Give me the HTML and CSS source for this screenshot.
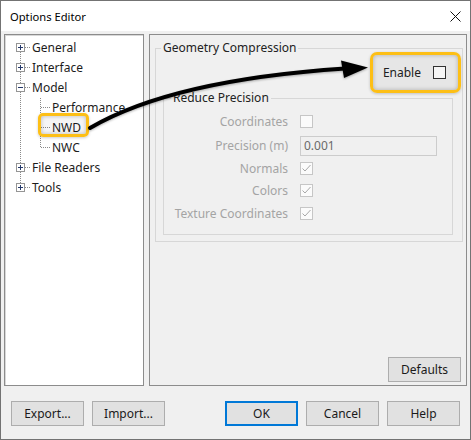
FILE: index.html
```html
<!DOCTYPE html>
<html>
<head>
<meta charset="utf-8">
<link rel="stylesheet" href="styles.css">
</head>
<body>
<div class="window">
  <div class="titlebar">
    <span class="title">Options Editor</span>
    <svg class="close" width="11" height="11" viewBox="0 0 11 11"><path d="M0.5 0.5 L10.5 10.5 M10.5 0.5 L0.5 10.5" stroke="#111" stroke-width="1" fill="none"/></svg>
  </div>
  <div class="body">
    <div class="panes">
      <div class="tree">
        <div class="row">
          <svg class="conn" width="27" height="20"><path d="M15.5 14 V20" class="dot"/><path d="M20 9.5 H26" class="dot"/><rect x="11.5" y="5.5" width="8" height="8" class="box"/><path d="M13 9.5 H18 M15.5 7 V12" class="sign"/></svg>
          <span class="t">General</span>
        </div>
        <div class="row">
          <svg class="conn" width="27" height="20"><path d="M15.5 0 V5 M15.5 14 V20" class="dot"/><path d="M20 9.5 H26" class="dot"/><rect x="11.5" y="5.5" width="8" height="8" class="box"/><path d="M13 9.5 H18 M15.5 7 V12" class="sign"/></svg>
          <span class="t">Interface</span>
        </div>
        <div class="row">
          <svg class="conn" width="27" height="20"><path d="M15.5 0 V5 M15.5 14 V20" class="dot"/><path d="M20 9.5 H26" class="dot"/><rect x="11.5" y="5.5" width="8" height="8" class="box"/><path d="M13 9.5 H18" class="sign"/></svg>
          <span class="t">Model</span>
        </div>
        <div class="row">
          <svg class="conn" width="47" height="20"><path d="M15.5 0 V20 M35.5 0 V20" class="dot"/><path d="M36 9.5 H46" class="dot"/></svg>
          <span class="t">Performance</span>
        </div>
        <div class="row">
          <svg class="conn" width="47" height="20"><path d="M15.5 0 V20 M35.5 0 V20" class="dot"/><path d="M36 9.5 H46" class="dot"/></svg>
          <span class="t">NWD</span>
        </div>
        <div class="row">
          <svg class="conn" width="47" height="20"><path d="M15.5 0 V20 M35.5 0 V10" class="dot"/><path d="M36 9.5 H46" class="dot"/></svg>
          <span class="t">NWC</span>
        </div>
        <div class="row">
          <svg class="conn" width="27" height="20"><path d="M15.5 0 V5 M15.5 14 V20" class="dot"/><path d="M20 9.5 H26" class="dot"/><rect x="11.5" y="5.5" width="8" height="8" class="box"/><path d="M13 9.5 H18 M15.5 7 V12" class="sign"/></svg>
          <span class="t">File Readers</span>
        </div>
        <div class="row">
          <svg class="conn" width="27" height="20"><path d="M15.5 0 V5" class="dot"/><path d="M20 9.5 H26" class="dot"/><rect x="11.5" y="5.5" width="8" height="8" class="box"/><path d="M13 9.5 H18 M15.5 7 V12" class="sign"/></svg>
          <span class="t">Tools</span>
        </div>
      </div>
      <div class="page">
        <fieldset class="geo">
          <legend>Geometry Compression</legend>
          <div class="enable">
            <span>Enable</span>
            <span class="cb"></span>
          </div>
          <fieldset class="reduce">
            <legend>Reduce Precision</legend>
            <div class="grid">
              <span class="lbl">Coordinates</span>
              <span class="cb dis"></span>
              <span class="lbl">Precision (m)</span>
              <span class="tb">0.001</span>
              <span class="lbl">Normals</span>
              <span class="cb dis"><svg width="11" height="11" viewBox="0 0 11 11"><path d="M1.5 5.5 L4 8 L9.5 2" class="chk"/></svg></span>
              <span class="lbl">Colors</span>
              <span class="cb dis"><svg width="11" height="11" viewBox="0 0 11 11"><path d="M1.5 5.5 L4 8 L9.5 2" class="chk"/></svg></span>
              <span class="lbl">Texture Coordinates</span>
              <span class="cb dis"><svg width="11" height="11" viewBox="0 0 11 11"><path d="M1.5 5.5 L4 8 L9.5 2" class="chk"/></svg></span>
            </div>
          </fieldset>
        </fieldset>
        <button class="btn defaults">Defaults</button>
      </div>
    </div>
    <div class="buttons">
      <button class="btn">Export...</button>
      <button class="btn">Import...</button>
      <span class="spacer"></span>
      <button class="btn ok">OK</button>
      <button class="btn">Cancel</button>
      <button class="btn">Help</button>
    </div>
  </div>
  <div class="hl hl-nwd"></div>
  <div class="hl hl-enable"></div>
  <svg class="arrow" width="471" height="440" viewBox="0 0 471 440">
    <path d="M90 128 Q172 80 345 68.5" fill="none" stroke="#000" stroke-width="4" stroke-linecap="round"/>
    <path d="M341 60.5 L344 78 L368 67.5 Z" fill="#000"/>
  </svg>
</div>
</body>
</html>
```
FILE: styles.css
```css
* { box-sizing: border-box; }
html, body { margin: 0; padding: 0; background: #fff; }
body {
  font-family: "Noto Sans", "DejaVu Sans", sans-serif;
  font-size: 12px;
  color: #1a1a1a;
}
.window {
  position: relative;
  width: 471px;
  height: 440px;
  border: 1px solid #737373;
  background: #f0f0f0;
  display: flex;
  flex-direction: column;
}
.titlebar {
  height: 30px;
  flex: none;
  background: #fff;
  display: flex;
  align-items: center;
  justify-content: space-between;
  padding: 0 9px 0 9px;
}
.title { font-size: 11.2px; color: #000; }
.close { display: block; }
.body {
  flex: 1;
  padding: 3px 3px 0 3px;
  display: flex;
  flex-direction: column;
}
.panes {
  display: flex;
  gap: 5px;
  height: 352px;
  flex: none;
}
.tree {
  width: 140px;
  flex: none;
  background: #fff;
  border: 1px solid #8c8c8c;
  box-shadow: inset 1px 1px 0 #d8d8d8;
  padding-top: 3px;
}
.row {
  height: 20px;
  display: flex;
  align-items: center;
  white-space: nowrap;
}
.conn { flex: none; display: block; }
.dot { stroke: #8a8a8a; stroke-width: 1; stroke-dasharray: 1 1; fill: none; }
.box { fill: #fff; stroke: #959595; stroke-width: 1; }
.sign { stroke: #24386a; stroke-width: 1; fill: none; }
.t { line-height: 20px; color: #1c1c1c; }

.page {
  flex: 1;
  border: 1px solid #8c8c8c;
  display: flex;
  flex-direction: column;
  padding: 5px 3px 3px 5px;
}
fieldset {
  margin: 0;
  min-width: 0;
  border: 1px solid #d7d7d7;
}
legend {
  padding: 0 2px;
  line-height: 16px;
  color: #222;
}
.geo {
  padding: 4px 9px 6px 7px;
}
.geo > legend { margin-left: -2px; }
.enable {
  height: 24px;
  display: flex;
  justify-content: flex-end;
  align-items: center;
  gap: 12px;
  padding-right: 7px;
  color: #222;
}
.reduce {
  margin-top: 6px;
  padding: 4px 9px 9px 7px;
}
.grid {
  display: grid;
  grid-template-columns: 117px 137px;
  grid-template-rows: 23px 25px 21px 23px 23px;
  column-gap: 12px;
  align-items: center;
}
.lbl {
  text-align: right;
  color: #a4a4a4;
  white-space: nowrap;
}
.tb {
  height: 20px;
  border: 1px solid #cccccc;
  background: #f0f0f0;
  color: #6a6a6a;
  padding-left: 3px;
  line-height: 18px;
}
.cb {
  width: 13px;
  height: 13px;
  border: 1px solid #333;
  background: #fff;
  display: block;
}
.cb.dis { border-color: #c6c6c6; background: #fbfbfb; }
.cb svg { display: block; }
.chk { fill: none; stroke: #a8a8a8; stroke-width: 1; }

.btn {
  width: 73px;
  height: 25px;
  border: 1px solid #adadad;
  background: #e1e1e1;
  font-family: inherit;
  font-size: 12px;
  color: #1a1a1a;
  padding: 0;
  margin: 0;
}
.btn.ok { border: 2px solid #0078d7; }
.defaults {
  margin-top: auto;
  align-self: flex-end;
  margin-right: 2px;
}
.buttons {
  margin-top: 15px;
  display: flex;
  gap: 8px;
  padding: 0 7px;
}
.spacer { flex: 1; }

.hl {
  position: absolute;
  border: 3px solid #fdbf16;
  background: rgba(0, 0, 0, 0.04);
  box-shadow: inset 0 0 4px rgba(0, 0, 0, 0.25), 0 1px 3px rgba(0, 0, 0, 0.2);
}
.hl-nwd { left: 37px; top: 112px; width: 51px; height: 24px; border-radius: 5px; }
.hl-enable { left: 369px; top: 51px; width: 91px; height: 41px; border-radius: 7px; }
.arrow {
  position: absolute;
  left: -1px;
  top: -1px;
  pointer-events: none;
  filter: drop-shadow(0 1px 1px rgba(0, 0, 0, 0.3));
}
```
